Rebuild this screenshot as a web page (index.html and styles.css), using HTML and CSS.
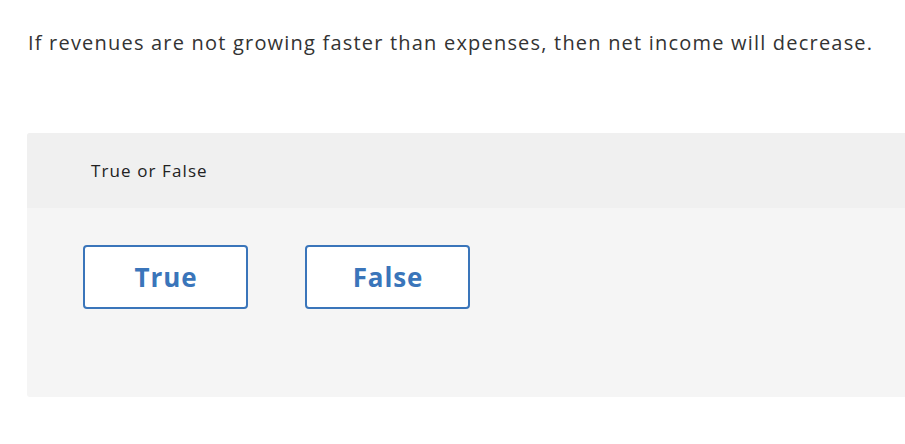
FILE: index.html
```html
<!DOCTYPE html>
<html>
<head>
<meta charset="utf-8">
<link rel="stylesheet" href="styles.css">
</head>
<body>
<div class="page">
  <p class="question">If revenues are not growing faster than expenses, then net income will decrease.</p>
  <div class="card">
    <div class="card-header">True or False</div>
    <div class="card-body">
      <button class="choice">True</button>
      <button class="choice">False</button>
    </div>
  </div>
</div>
</body>
</html>
```

FILE: styles.css
```css
html, body {
  margin: 0;
  padding: 0;
  background: #ffffff;
  overflow: hidden;
}
.page {
  width: 905px;
  height: 444px;
  font-family: "Open Sans", "Liberation Sans", sans-serif;
  color: #333333;
}
.question {
  margin: 0;
  padding: 29px 0 0 28px;
  font-size: 20px;
  line-height: 28px;
  letter-spacing: 1.2px;
  color: #333333;
}
.card {
  margin: 76px 0 0 27px;
  width: 900px;
  border-radius: 3px;
  overflow: hidden;
  background: #f5f5f5;
}
.card-header {
  height: 75px;
  box-sizing: border-box;
  padding-left: 64px;
  display: flex;
  align-items: center;
  background: #f0f0f0;
  font-size: 17px;
  letter-spacing: 1.1px;
  color: #222222;
}
.card-body {
  height: 189px;
  box-sizing: border-box;
  padding: 37px 0 0 56px;
  display: flex;
  gap: 57px;
  align-items: flex-start;
}
.choice {
  width: 165px;
  height: 64px;
  box-sizing: border-box;
  border: 2px solid #3a75ba;
  border-radius: 4px;
  background: #ffffff;
  color: #3a75ba;
  font-family: "Open Sans", "Liberation Sans", sans-serif;
  font-weight: 700;
  font-size: 26px;
  letter-spacing: 0.9px;
  padding: 0 0 0 1px;
  cursor: pointer;
}
```
